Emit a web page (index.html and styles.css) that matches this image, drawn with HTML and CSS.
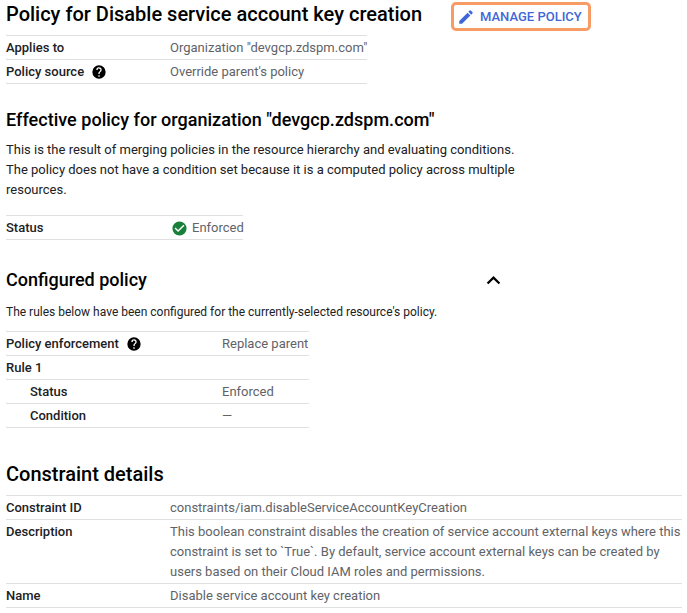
FILE: index.html
```html
<!DOCTYPE html>
<html lang="en">
<head>
<meta charset="utf-8">
<title>Policy</title>
<link rel="stylesheet" href="styles.css">
</head>
<body>
<header class="title-row">
  <h1 class="title">Policy for Disable service account key creation</h1>
  <button class="manage" type="button">
    <svg class="pencil" viewBox="0 0 24 24" width="18" height="18"><path d="M3 17.25V21h3.75L17.81 9.94l-3.75-3.75L3 17.25zM20.71 7.04a1 1 0 0 0 0-1.41l-2.34-2.34a1 1 0 0 0-1.41 0l-1.83 1.83 3.75 3.75 1.83-1.83z"/></svg>
    <span>MANAGE POLICY</span>
  </button>
</header>

<div class="table table-top">
  <div class="row"><div class="key">Applies to</div><div class="val nowrap">Organization "devgcp.zdspm.com"</div></div>
  <div class="row"><div class="key">Policy source <svg class="help" viewBox="0 0 24 24" width="16" height="16"><path d="M12 2a10 10 0 1 0 0 20 10 10 0 0 0 0-20zm1 17h-2v-2h2v2zm2.07-7.75-.9.92C13.45 12.9 13 13.5 13 15h-2v-.5c0-1.1.45-2.1 1.17-2.83l1.24-1.26A2 2 0 1 0 10 9H8a4 4 0 1 1 8 0c0 .88-.36 1.68-.93 2.25z"/></svg></div><div class="val">Override parent's policy</div></div>
</div>

<h2 class="heading heading-effective">Effective policy for organization "devgcp.zdspm.com"</h2>
<p class="para para-effective">This is the result of merging policies in the resource hierarchy and evaluating conditions. The policy does not have a condition set because it is a computed policy across multiple resources.</p>

<div class="table table-status">
  <div class="row"><div class="key key-status">Status</div><div class="val val-status"><svg class="check" viewBox="0 0 24 24" width="17" height="17"><path d="M12 2a10 10 0 1 0 0 20 10 10 0 0 0 0-20zm-2 15-5-5 1.41-1.41L10 14.17l7.59-7.59L19 8l-9 9z"/></svg>Enforced</div></div>
</div>

<div class="config-head">
  <h2 class="heading">Configured policy</h2>
  <svg class="chevron" viewBox="0 0 24 24" width="27" height="27"><path d="M12 8l-6 6 1.41 1.41L12 10.83l4.59 4.58L18 14z"/></svg>
</div>
<p class="para para-config">The rules below have been configured for the currently-selected resource's policy.</p>

<div class="table table-config">
  <div class="row"><div class="key key-config">Policy enforcement <svg class="help" viewBox="0 0 24 24" width="16" height="16"><path d="M12 2a10 10 0 1 0 0 20 10 10 0 0 0 0-20zm1 17h-2v-2h2v2zm2.07-7.75-.9.92C13.45 12.9 13 13.5 13 15h-2v-.5c0-1.1.45-2.1 1.17-2.83l1.24-1.26A2 2 0 1 0 10 9H8a4 4 0 1 1 8 0c0 .88-.36 1.68-.93 2.25z"/></svg></div><div class="val">Replace parent</div></div>
  <div class="row"><div class="key key-config">Rule 1</div><div class="val"></div></div>
  <div class="row"><div class="key key-config indent">Status</div><div class="val">Enforced</div></div>
  <div class="row"><div class="key key-config indent">Condition</div><div class="val">—</div></div>
</div>

<h2 class="heading heading-constraint">Constraint details</h2>
<div class="table table-constraint">
  <div class="row"><div class="key">Constraint ID</div><div class="val">constraints/iam.disableServiceAccountKeyCreation</div></div>
  <div class="row"><div class="key">Description</div><div class="val">This boolean constraint disables the creation of service account external keys where this constraint is set to `True`. By default, service account external keys can be created by users based on their Cloud IAM roles and permissions.</div></div>
  <div class="row"><div class="key">Name</div><div class="val">Disable service account key creation</div></div>
</div>
</body>
</html>
```

FILE: styles.css
```css
* { box-sizing: border-box; }
html, body { margin: 0; background: #fff; }
body {
  padding: 2px 0 0 6px;
  font-family: Roboto, "Liberation Sans", sans-serif;
  font-size: 13px;
  line-height: 20px;
  color: #202124;
  overflow: hidden;
}
.title-row { display: flex; align-items: flex-start; height: 33px; }
.title { margin: 0; font-size: 20px; line-height: 24px; font-weight: 500; color: #000; letter-spacing: 0; }
.manage {
  margin-left: 29px;
  width: 140px;
  height: 29px;
  display: flex;
  align-items: center;
  gap: 5px;
  padding: 0 0 0 3px;
  background: #fff;
  border: 3px solid #f89c66;
  border-radius: 5px;
  color: #3f67d6;
  font: 500 13px/16px Roboto, sans-serif;
}
.pencil { fill: #3f67d6; flex: none; }
.table { border-top: 1px solid #e0e0e0; }
.row { display: flex; border-bottom: 1px solid #e0e0e0; padding: 2px 0 1px; }
.key { flex: none; width: 164px; font-weight: 500; color: #202124; display: flex; align-items: center; gap: 7px; height: 20px; }
.val { flex: 1; color: #5f6368; }
.nowrap { white-space: nowrap; }
.help { fill: #000; flex: none; }
.table-top { width: 361px; }
.heading { margin: 0; font-size: 18px; line-height: 24px; font-weight: 500; color: #000; }
.heading-effective { margin-top: 24px; letter-spacing: 0.02px; }
.para { margin: 0; }
.para-effective { width: 515px; margin-top: 8px; }
.table-status { width: 237px; margin-top: 15px; }
.key-status { width: 165px; }
.val-status { display: flex; align-items: center; gap: 4px; }
.check { fill: #188038; flex: none; }
.config-head { display: flex; align-items: center; width: 501px; justify-content: space-between; margin-top: 28px; }
.chevron { fill: #000; flex: none; margin: -2px 0; }
.para-config { font-size: 12px; margin-top: 10px; }
.table-config { width: 303px; margin-top: 9px; }
.key-config { width: 216px; }
.indent { padding-left: 24px; }
.heading-constraint { margin-top: 34px; font-size: 20px; }
.table-constraint { width: 676px; margin-top: 9px; }
```
